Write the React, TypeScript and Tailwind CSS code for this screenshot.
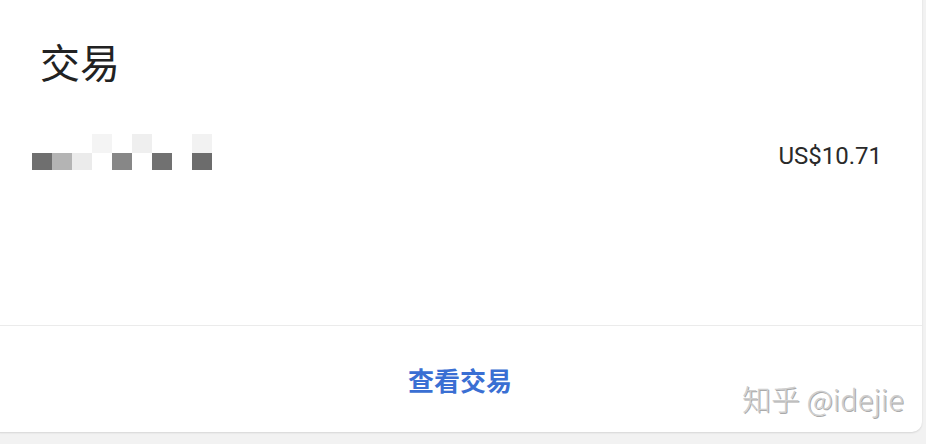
const blocks = [
  { top: false, color: 'bg-[#6f6f6f]' },
  { top: false, color: 'bg-[#b4b4b4]' },
  { top: false, color: 'bg-[#ebebeb]' },
  { top: true, color: 'bg-[#f4f4f4]' },
  { top: false, color: 'bg-[#878787]' },
  { top: true, color: 'bg-[#efefef]' },
  { top: false, color: 'bg-[#717171]' },
  { top: true, color: 'bg-white' },
  { top: false, color: 'bg-[#6c6c6c]', extra: true },
]

const Masked = () => {
  return (
    <div className="flex">
      {blocks.map((b, i) => (
        <div key={i} className="flex flex-col w-[20px]">
          <div className={`h-[19px] ${b.top ? b.color : ''} ${b.extra ? 'bg-[#f2f2f2]' : ''}`} />
          <div className={`h-[17px] ${b.top ? '' : b.color}`} />
        </div>
      ))}
    </div>
  )
}

export default function App() {
  return (
    <div
      className="relative w-[926px] h-[444px] overflow-hidden bg-[#f2f2f2]"
      style={{ fontFamily: 'Roboto, "Noto Sans CJK SC", sans-serif' }}
    >
      <div className="ml-[-10px] mt-[-12px] w-[932px] h-[444px] bg-white rounded-[10px] shadow-[0_1px_2px_rgba(0,0,0,0.12)] flex flex-col">
        <div className="h-[337px] pl-[50px] pr-[40px] pt-[49px]">
          <h1 className="text-[40px] leading-[48px] text-[#222] font-normal" style={{ fontFamily: '"Noto Sans CJK SC", sans-serif' }}>
            交易
          </h1>
          <div className="mt-[49px] flex items-end justify-between">
            <div className="ml-[-8px]">
              <Masked />
            </div>
            <span className="text-[24px] leading-[28px] text-[#2a2a2a]">US$10.71</span>
          </div>
        </div>
        <div className="h-px bg-[#ebebeb]" />
        <div className="flex-1 flex items-center justify-center pl-[8px]">
          <button
            className="text-[26px] font-bold text-[#3a6fd3]"
            style={{ fontFamily: '"Noto Sans CJK SC", sans-serif' }}
          >
            查看交易
          </button>
        </div>
      </div>
      <div
        className="absolute left-[742px] top-[380px] text-[29px] leading-[36px] text-[#cfcfcf] font-light [text-shadow:1px_1px_0_#aaa]"
        style={{ fontFamily: '"Noto Sans CJK SC", sans-serif' }}
      >
        知乎 @idejie
      </div>
    </div>
  )
}
